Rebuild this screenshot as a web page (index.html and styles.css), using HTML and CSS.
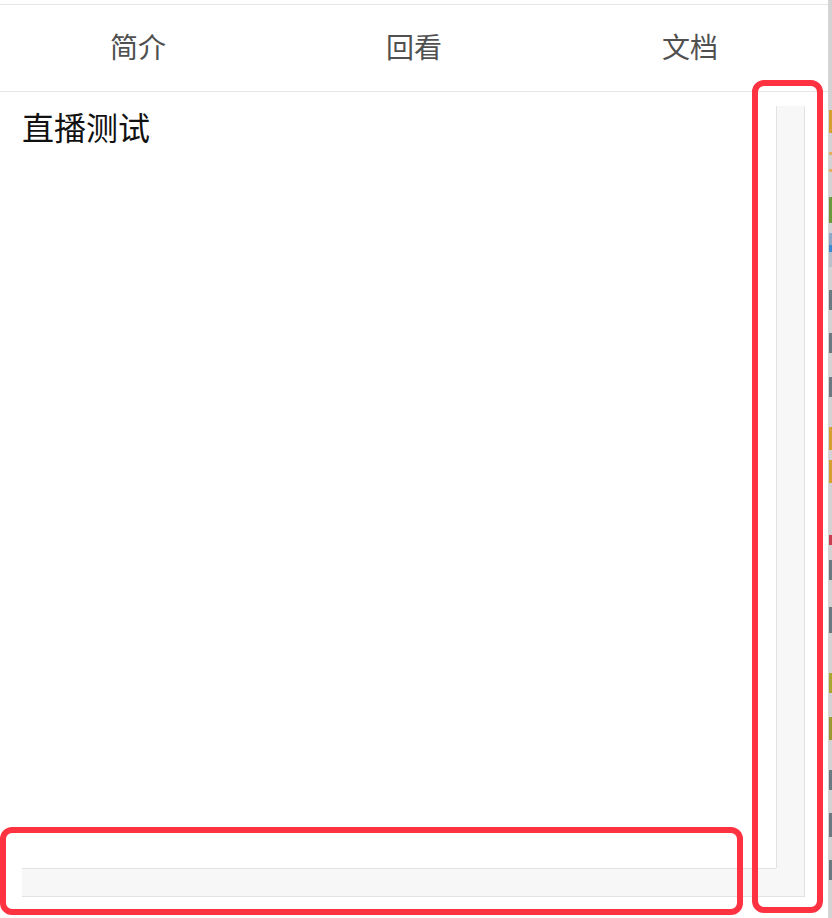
FILE: index.html
```html
<!DOCTYPE html>
<html lang="zh">
<head>
<meta charset="utf-8">
<title>直播测试</title>
<link rel="stylesheet" href="styles.css">
</head>
<body>
<div class="page">
  <div class="panel">
    <nav class="tabs">
      <div class="tab">简介</div>
      <div class="tab">回看</div>
      <div class="tab">文档</div>
    </nav>
    <div class="scroller">
      <div class="viewport">
        <h1 class="title">直播测试</h1>
      </div>
      <div class="vtrack"></div>
      <div class="htrack"></div>
      <div class="corner"></div>
    </div>
  </div>
  <div class="strip"></div>
  <div class="mark mark-right"></div>
  <div class="mark mark-bottom"></div>
</div>
</body>
</html>
```

FILE: styles.css
```css
html, body {
  margin: 0;
  padding: 0;
  background: #ffffff;
}

body {
  font-family: "Noto Sans CJK SC", "Noto Sans", sans-serif;
}

.page {
  position: relative;
  display: flex;
  width: 832px;
  height: 918px;
  overflow: hidden;
}

.panel {
  width: 828px;
  height: 918px;
  flex: none;
  background: #ffffff;
  border-right: 1px solid #d6d6d6;
}

.tabs {
  margin-top: 4px;
  display: flex;
  height: 86px;
  border-top: 1px solid #e6e6e6;
  border-bottom: 1px solid #e6e6e6;
}

.tab {
  flex: 1;
  display: flex;
  align-items: center;
  justify-content: center;
  font-size: 28px;
  color: #505050;
  padding-bottom: 4px;
}

.scroller {
  margin: 14px 0 0 22px;
  display: grid;
  grid-template-columns: 754px 29px;
  grid-template-rows: 762px 29px;
}

.viewport {
  grid-column: 1;
  grid-row: 1;
}

.title {
  margin: 0;
  font-size: 32px;
  font-weight: 400;
  line-height: 40px;
  color: #111111;
}

.vtrack {
  grid-column: 2;
  grid-row: 1;
  background: #f7f7f7;
  border-left: 1px solid #e2e2e2;
  border-right: 1px solid #e2e2e2;
}

.htrack {
  grid-column: 1;
  grid-row: 2;
  background: #f7f7f7;
  border-top: 1px solid #e2e2e2;
  border-bottom: 1px solid #e2e2e2;
}

.corner {
  grid-column: 2;
  grid-row: 2;
  background: #f7f7f7;
  border-right: 1px solid #e2e2e2;
  border-bottom: 1px solid #e2e2e2;
}

.strip {
  flex: 1;
  height: 918px;
  background: linear-gradient(to bottom,
    #d3d3d3 0 110px,
    #d4a030 110px 133px,
    #d3d3d3 133px 152px,
    #e0b060 152px 155px,
    #d3d3d3 155px 169px,
    #e0b060 169px 172px,
    #d3d3d3 172px 197px,
    #6a9a3a 197px 223px,
    #d3d3d3 223px 233px,
    #8ea8c8 233px 245px,
    #3a8ad0 245px 252px,
    #b8c0cc 252px 267px,
    #d3d3d3 267px 290px,
    #6a7a80 290px 310px,
    #d3d3d3 310px 333px,
    #6a7a80 333px 353px,
    #d3d3d3 353px 377px,
    #6a7a80 377px 397px,
    #d3d3d3 397px 427px,
    #d4a030 427px 450px,
    #d3d3d3 450px 460px,
    #d4a030 460px 483px,
    #d3d3d3 483px 535px,
    #c84050 535px 545px,
    #d3d3d3 545px 560px,
    #6a7a80 560px 580px,
    #d3d3d3 580px 607px,
    #6a7a80 607px 633px,
    #d3d3d3 633px 673px,
    #a8a830 673px 693px,
    #d3d3d3 693px 717px,
    #9a9a30 717px 740px,
    #d3d3d3 740px 770px,
    #6a7a80 770px 790px,
    #d3d3d3 790px 813px,
    #6a7a80 813px 837px,
    #d3d3d3 837px 860px,
    #6a7a80 860px 880px,
    #d3d3d3 880px 918px);
}

.mark {
  position: absolute;
  box-sizing: border-box;
  border: 6px solid #ff3242;
  border-radius: 12px;
}

.mark-right {
  left: 752px;
  top: 80px;
  width: 71px;
  height: 833px;
}

.mark-bottom {
  left: 0;
  top: 827px;
  width: 743px;
  height: 88px;
}
```
